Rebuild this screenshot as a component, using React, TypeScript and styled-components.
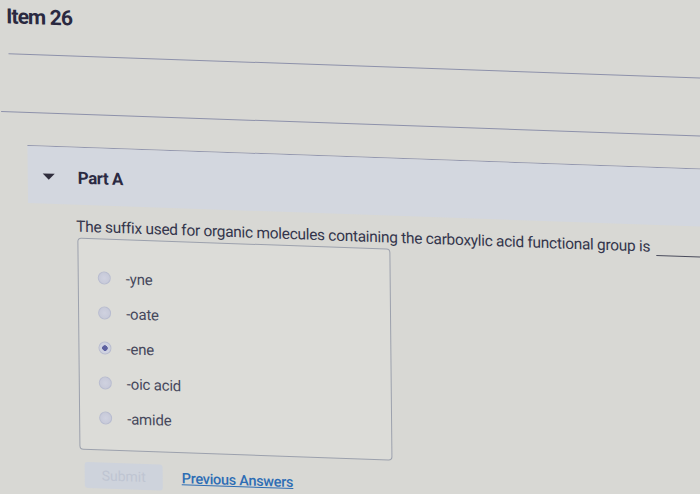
import React, { FC } from 'react';
import styled, { createGlobalStyle, css } from 'styled-components';

const options = ['-yne', '-oate', '-ene', '-oic acid', '-amide'];
const selected = '-ene';

const App: FC = () => {
  return (
    <>
      <GlobalStyle />
      <Page>
        <Header>
          <ItemTitle>Item 26</ItemTitle>
        </Header>
        <Divider inset={8} />
        <Gap size={57} />
        <Divider inset={0} />
        <Gap size={32} />
        <Panel>
          <PartHeader>
            <Caret />
            <PartTitle>Part A</PartTitle>
          </PartHeader>
          <Question>
            The suffix used for organic molecules containing the carboxylic acid functional group is
            <Blank />
          </Question>
          <ChoiceBox>
            {options.map((label) => (
              <ChoiceRow key={label}>
                <Radio checked={label === selected} />
                <ChoiceLabel>{label}</ChoiceLabel>
              </ChoiceRow>
            ))}
          </ChoiceBox>
          <Footer>
            <SubmitButton disabled>Submit</SubmitButton>
            <PreviousLink href="#">Previous Answers</PreviousLink>
          </Footer>
        </Panel>
      </Page>
    </>
  );
};

const GlobalStyle = createGlobalStyle`
  html,
  body {
    margin: 0;
    padding: 0;
    background-color: #d8d8d4;
    overflow: hidden;
  }
`;

const Page = styled.div`
  width: 700px;
  height: 494px;
  font-family: Roboto, 'Liberation Sans', sans-serif;
  color: #33354a;
  transform: matrix(1, 0.035, 0.01, 1, 0, 0);
  transform-origin: 0 0;
`;

const Header = styled.div`
  height: 53px;
  padding-top: 4px;
  padding-left: 6px;
  box-sizing: border-box;
`;

const ItemTitle = styled.h1`
  margin: 0;
  font-size: 21px;
  font-weight: 700;
  line-height: 24px;
  letter-spacing: -0.9px;
  color: #2a2940;
`;

const Divider = styled.div<{ inset: number }>`
  margin-left: ${({ inset }) => inset}px;
  border-top: 1.5px solid #8d91aa;
`;

const Gap = styled.div<{ size: number }>`
  height: ${({ size }) => size}px;
`;

const Panel = styled.section`
  margin-left: 26px;
  border-top: 1.5px solid #9397ae;
`;

const PartHeader = styled.div`
  height: 57px;
  display: flex;
  align-items: center;
  padding: 2px 0 0 15px;
  box-sizing: border-box;
  background-color: #d3d7df;
`;

const Caret = styled.span`
  width: 0;
  height: 0;
  border-left: 6px solid transparent;
  border-right: 6px solid transparent;
  border-top: 6px solid #2f2d3c;
  margin-right: 23px;
`;

const PartTitle = styled.h2`
  margin: 0;
  font-size: 17px;
  font-weight: 700;
  letter-spacing: -0.5px;
  color: #2b2a42;
`;

const Question = styled.p`
  margin: 12px 0 0 48px;
  font-size: 15.5px;
  line-height: 20px;
  letter-spacing: -0.3px;
  color: #34364c;
  white-space: nowrap;
`;

const Blank = styled.span`
  display: inline-block;
  width: 48px;
  margin-left: 6px;
  border-bottom: 1px solid #4a4c5c;
  vertical-align: -4px;
`;

const ChoiceBox = styled.div`
  width: 313px;
  height: 212px;
  margin: 1px 0 0 49px;
  padding-top: 21px;
  box-sizing: border-box;
  display: flex;
  flex-direction: column;
  border: 1.3px solid #9ca1ad;
  border-radius: 4px;
  background-color: #dcdcd8;
`;

const ChoiceRow = styled.label`
  height: 35px;
  display: flex;
  align-items: center;
  padding-left: 19px;
`;

const Radio = styled.span<{ checked: boolean }>`
  width: 13px;
  height: 13px;
  border-radius: 50%;
  box-sizing: border-box;
  border: 1px solid #b8bcd0;
  background: radial-gradient(circle, #d0d2e0 0%, #c3c6d6 100%);
  margin-right: 15px;

  ${({ checked }) =>
    checked &&
    css`
      background: radial-gradient(circle, #5d61a0 0, #5d61a0 2.5px, #cfd2e0 3px);
    `}
`;

const ChoiceLabel = styled.span`
  font-size: 15px;
  letter-spacing: -0.2px;
  color: #46485c;
`;

const Footer = styled.div`
  height: 26px;
  margin-top: 12px;
  display: flex;
  align-items: center;
  padding-left: 54px;
`;

const SubmitButton = styled.button`
  width: 78px;
  height: 26px;
  margin-right: 19px;
  padding: 0;
  border: none;
  border-radius: 3px;
  background-color: #ced3dc;
  font-family: Roboto, 'Liberation Sans', sans-serif;
  font-size: 14px;
  color: #bfc5d2;
`;

const PreviousLink = styled.a`
  font-size: 14.5px;
  font-weight: 500;
  letter-spacing: -0.3px;
  color: #2d6db4;
  text-decoration: underline;
`;

export default App;
